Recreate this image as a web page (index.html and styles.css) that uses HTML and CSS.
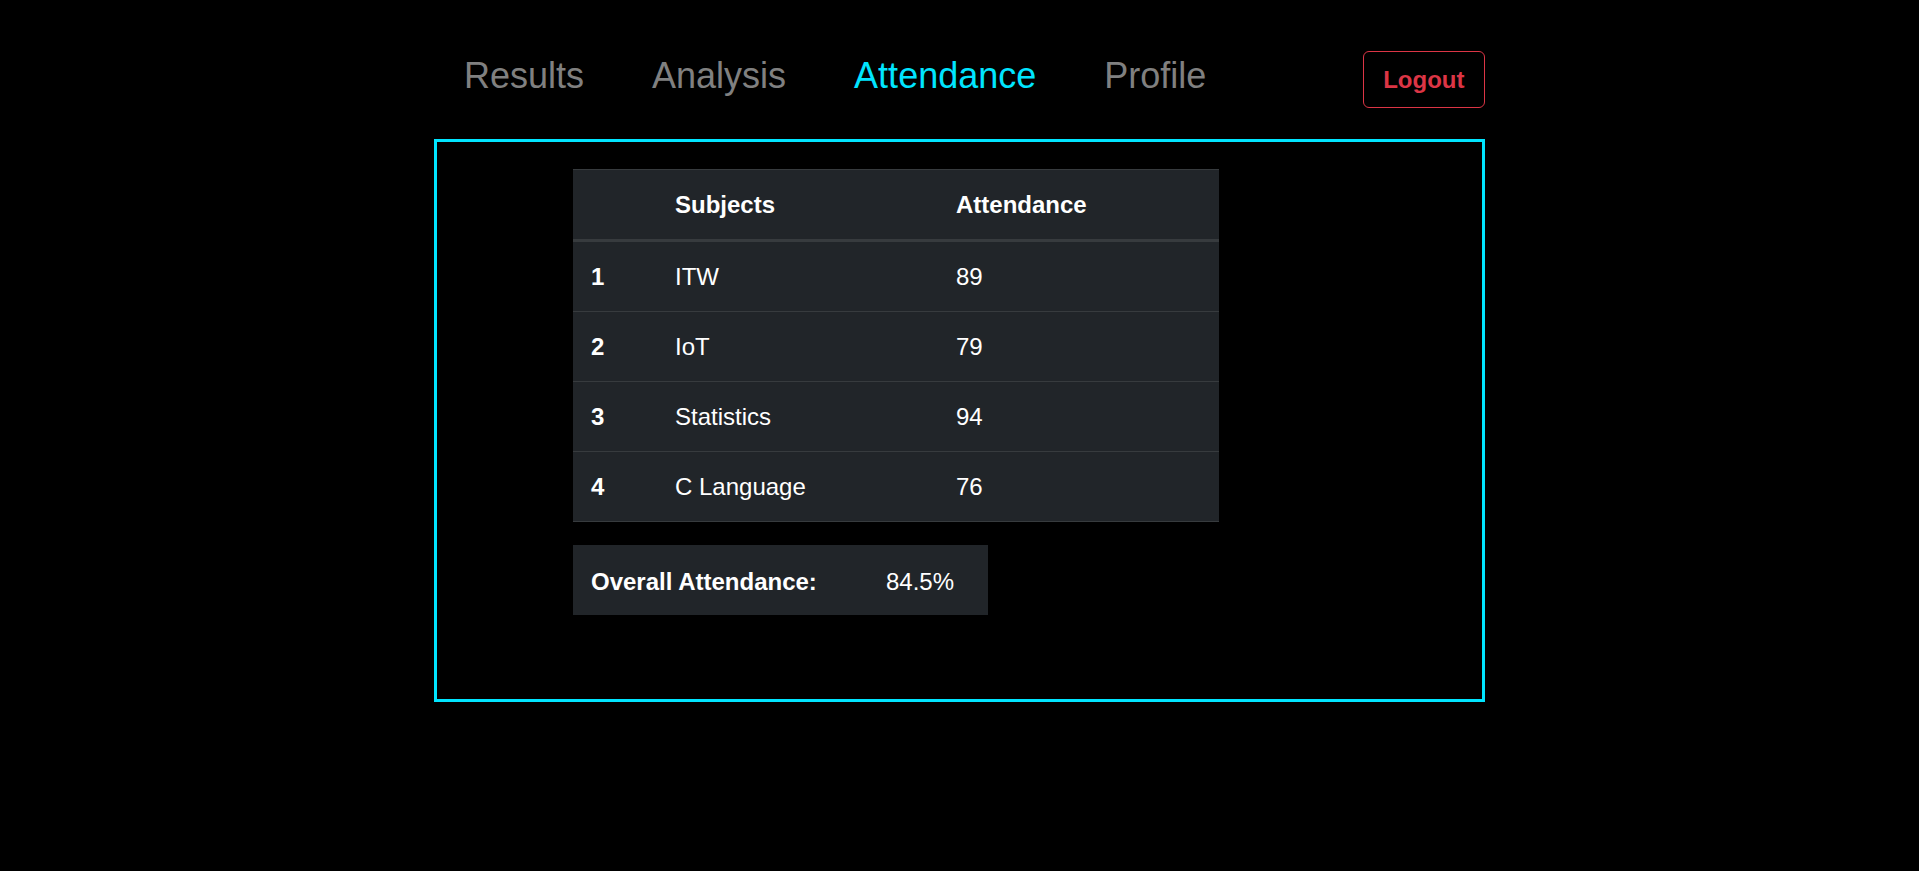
FILE: index.html
```html
<!DOCTYPE html>
<html lang="en">
<head>
<meta charset="utf-8">
<title>Attendance</title>
<link rel="stylesheet" href="styles.css">
</head>
<body>
<div class="page">
  <header class="topbar">
    <nav class="nav">
      <a href="#" class="nav-link">Results</a>
      <a href="#" class="nav-link">Analysis</a>
      <a href="#" class="nav-link active">Attendance</a>
      <a href="#" class="nav-link">Profile</a>
    </nav>
    <button class="logout" type="button">Logout</button>
  </header>
  <main class="box">
    <table class="att-table">
      <colgroup>
        <col class="c1"><col class="c2"><col class="c3">
      </colgroup>
      <thead>
        <tr><th></th><th>Subjects</th><th>Attendance</th></tr>
      </thead>
      <tbody>
        <tr><th>1</th><td>ITW</td><td>89</td></tr>
        <tr><th>2</th><td>IoT</td><td>79</td></tr>
        <tr><th>3</th><td>Statistics</td><td>94</td></tr>
        <tr><th>4</th><td>C Language</td><td>76</td></tr>
      </tbody>
    </table>
    <div class="overall">
      <span class="overall-label">Overall Attendance:</span>
      <span class="overall-value">84.5%</span>
    </div>
  </main>
</div>
</body>
</html>
```
FILE: styles.css
```css
html, body {
  margin: 0;
  background: #000;
}
body {
  font-family: "Liberation Sans", Arial, sans-serif;
  color: #fff;
}
.page {
  width: 1051px;
  margin: 0 auto;
}
.topbar {
  display: flex;
  justify-content: space-between;
  align-items: flex-start;
  padding-top: 48px;
}
.nav {
  display: flex;
  gap: 68px;
  padding-left: 30px;
  margin-top: 2px;
}
.nav-link {
  font-size: 36px;
  line-height: 52px;
  color: #808080;
  text-decoration: none;
}
.nav-link.active {
  color: #00e5ff;
}
.logout {
  margin-top: 3px;
  font-family: "Liberation Sans", Arial, sans-serif;
  font-weight: 700;
  font-size: 24px;
  line-height: 36px;
  color: #dc3545;
  background: transparent;
  border: 1px solid #dc3545;
  border-radius: 6px;
  padding: 9.5px 19.5px;
}
.box {
  margin-top: 31px;
  border: 3px solid #00e5ff;
  padding: 27px 0 84px 136px;
}
.att-table {
  border-collapse: collapse;
  table-layout: fixed;
  width: 646px;
  background: #212529;
  color: #fff;
  font-size: 24px;
  border-top: 1px solid #373b3e;
}
.c1 { width: 84px; }
.c2 { width: 281px; }
.c3 { width: 281px; }
.att-table th,
.att-table td {
  padding: 16px 17px 16px 18px;
  line-height: 37px;
  text-align: left;
  border-bottom: 1px solid #373b3e;
}
.att-table th {
  font-weight: 700;
}
.att-table td {
  font-weight: 400;
}
.att-table thead th {
  border-bottom: 3px solid #373b3e;
}
.overall {
  display: flex;
  width: 415px;
  box-sizing: border-box;
  margin-top: 23px;
  padding: 18px 17px 14px 18px;
  background: #212529;
  font-size: 24px;
  line-height: 38px;
}
.overall-label {
  width: 295px;
  font-weight: 700;
}
.overall-value {
  font-weight: 400;
}
```
